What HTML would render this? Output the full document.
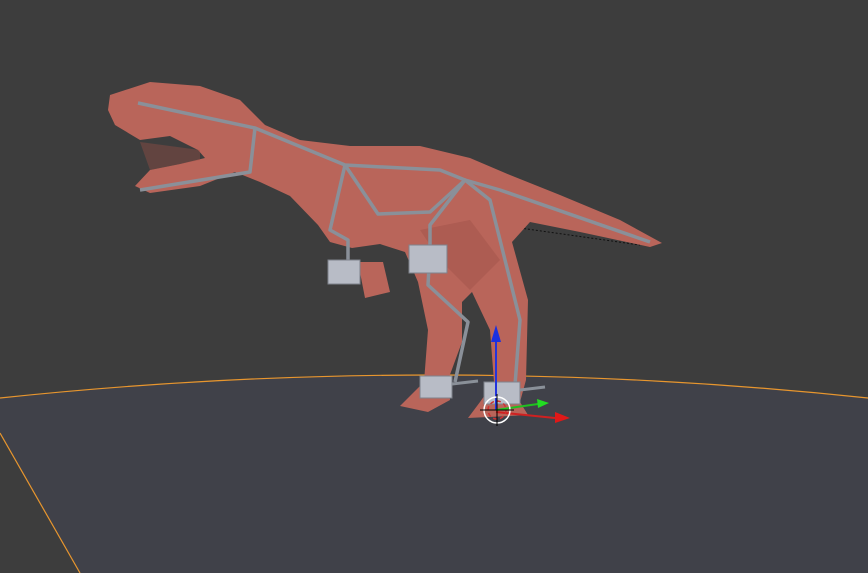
<!DOCTYPE html>
<html><head><style>html,body{margin:0;padding:0;background:#3d3d3d;width:868px;height:573px;overflow:hidden}</style></head>
<body>
<svg width="868" height="573" viewBox="0 0 868 573" xmlns="http://www.w3.org/2000/svg">
<rect width="868" height="573" fill="#3d3d3d"/>
<path d="M0,398 Q434,352 868,398 L868,573 L80,573 L0,433 Z" fill="#404149"/>
<path d="M0,398 Q434,352 868,398" fill="none" stroke="#e8962e" stroke-width="1.2"/>
<path d="M0,433 L80,573" fill="none" stroke="#e8962e" stroke-width="1.2"/>
<line x1="520" y1="228" x2="640" y2="245" stroke="#111" stroke-width="1" stroke-dasharray="2,2"/>
<g fill="#b9655a">
<path d="M110,95 L150,82 L200,86 L240,100 L265,125 L300,140 L350,146 L420,146 L470,158 L510,175 L560,195 L620,220 L662,243 L650,247 L580,232 L530,222 L512,242 L528,300 L526,380 L520,402 L528,415 L468,418 L480,402 L494,382 L490,330 L472,292 L462,302 L462,342 L448,380 L450,400 L428,412 L400,406 L424,382 L428,330 L418,282 L405,252 L380,244 L352,248 L330,242 L318,225 L290,196 L260,182 L235,172 L200,186 L150,193 L135,186 L150,170 L180,164 L205,158 L198,150 L170,136 L140,140 L115,125 L108,110 Z"/>
<path d="M358,262 L383,262 L390,292 L365,298 Z"/>
</g>
<g fill="#9a5146" opacity="0.4">
<path d="M420,230 L470,220 L500,260 L470,290 L440,260 Z"/>
<path d="M140,142 L200,150 L200,160 L150,170 Z"/>
</g>
<g fill="none" stroke="#8a9099" stroke-width="3.5" stroke-linejoin="round">
<path d="M138,103 L255,128 L250,172 L140,190"/>
<path d="M255,128 L345,165 L440,170 L465,180 L500,190 L650,242"/>
<path d="M345,165 L330,230 L348,240 L348,262"/>
<path d="M345,165 L378,214 L430,212 L465,180 L490,200 L500,240 L520,320 L515,385"/>
<path d="M465,180 L430,225 L430,250 L428,285 L468,322 L455,382"/>
</g>
<g fill="#b8bcc6" stroke="#7e828c" stroke-width="1">
<rect x="328" y="260" width="32" height="24"/>
<rect x="409" y="245" width="38" height="28"/>
<rect x="420" y="376" width="32" height="22"/>
<rect x="484" y="382" width="36" height="22"/>
</g>
<g stroke="#8a9099" stroke-width="3">
<line x1="452" y1="384" x2="478" y2="381"/>
<line x1="520" y1="390" x2="545" y2="387"/>
</g>
<line x1="496" y1="410" x2="496" y2="340" stroke="#2233dd" stroke-width="2"/>
<path d="M491,342 L496,325 L501,342 Z" fill="#1a30e0"/>
<line x1="496" y1="412" x2="555" y2="418" stroke="#d02020" stroke-width="2"/>
<path d="M555,412 L570,418 L555,423 Z" fill="#e01818"/>
<line x1="496" y1="410" x2="538" y2="404" stroke="#20c020" stroke-width="2"/>
<path d="M537,399 L549,403 L538,408 Z" fill="#22dd22"/>
<circle cx="497" cy="410" r="13" fill="none" stroke="#fff" stroke-width="1.5"/>
<circle cx="497" cy="410" r="9" fill="none" stroke="#d03030" stroke-width="1.5" stroke-dasharray="4,3"/>
<line x1="480" y1="410" x2="514" y2="410" stroke="#000" stroke-width="1"/>
<line x1="497" y1="394" x2="497" y2="426" stroke="#000" stroke-width="1"/>
</svg>
</body></html>
